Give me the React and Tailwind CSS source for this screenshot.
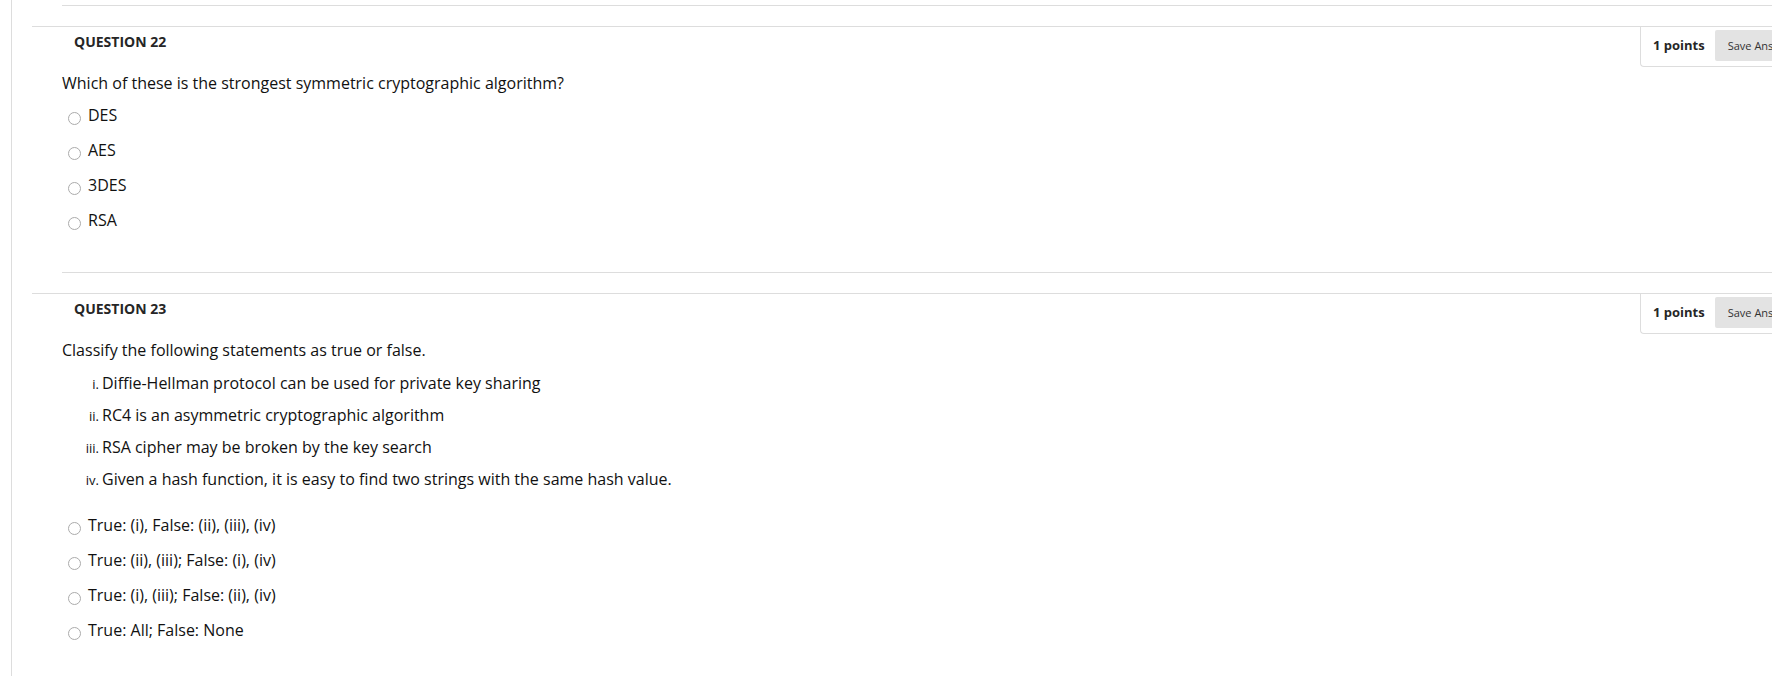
import React from 'react';

const questions = [
  {
    number: 22,
    points: 1,
    text: 'Which of these is the strongest symmetric cryptographic algorithm?',
    options: ['DES', 'AES', '3DES', 'RSA'],
  },
  {
    number: 23,
    points: 1,
    text: 'Classify the following statements as true or false.',
    statements: [
      ['i.', 'Diffie-Hellman protocol can be used for private key sharing'],
      ['ii.', 'RC4 is an asymmetric cryptographic algorithm'],
      ['iii.', 'RSA cipher may be broken by the key search'],
      ['iv.', 'Given a hash function, it is easy to find two strings with the same hash value.'],
    ],
    options: [
      'True: (i), False: (ii), (iii), (iv)',
      'True: (ii), (iii); False: (i), (iv)',
      'True: (i), (iii); False: (ii), (iv)',
      'True: All; False: None',
    ],
  },
];

// unchecked radio, the plain browser look
const Option = ({ label }) => (
  <label className="flex h-[35px] items-start">
    <span className="ml-[6px] mt-[14px] h-[13px] w-[13px] shrink-0 rounded-full border border-[#ababab] bg-white" />
    <span className="ml-[7px] text-[16px] leading-[35px]">{label}</span>
  </label>
);

const Question = ({ q }) => (
  <li className="mt-[20px] ml-[20px] border-t border-[#dddddd]">
    {/* header: title + points box */}
    <div className="flex items-start justify-between">
      <h3 className="ml-[42px] mt-[5px] text-[14px] font-bold leading-[20px] text-[#262626]">
        QUESTION {q.number}
      </h3>
      <div className="-mt-px flex w-[132px] shrink-0 items-center overflow-hidden rounded-bl-[4px] border border-r-0 border-[#dddddd] pb-[5px] pl-[12px] pt-[3px]">
        <span className="whitespace-nowrap text-[13px] font-bold text-[#262626]">{q.points} points</span>
        <span className="ml-[10px] h-[31px] shrink-0 whitespace-nowrap rounded-[2px] bg-[#e3e3e3] pl-[13px] pr-[13px] text-[11px] leading-[31px] text-[#333333]">
          Save Answer
        </span>
      </div>
    </div>

    <div className="pl-[30px]">
      <p className="mt-[4px] text-[16px] leading-[24px]">{q.text}</p>

      {q.statements && (
        <ol className="mt-[5px]">
          {q.statements.map(([num, s]) => (
            <li key={num} className="flex h-[32px] items-baseline leading-[32px]">
              <span className="w-[40px] shrink-0 pr-[3px] text-right text-[13px]">{num}</span>
              <span className="text-[16px]">{s}</span>
            </li>
          ))}
        </ol>
      )}

      <div className={q.statements ? 'mt-[13px]' : 'mt-[3px]'}>
        {q.options.map((o) => (
          <Option key={o} label={o} />
        ))}
      </div>
    </div>

    <div className="ml-[30px] mt-[34px] border-t border-[#dddddd]" />
  </li>
);

export default function App() {
  return (
    <div className="h-[676px] w-full overflow-hidden bg-white pl-[11px] font-['Open_Sans',sans-serif] text-[#111111]">
      <div className="h-full border-l border-[#dddddd]">
        <div className="h-[5px]" />
        <div className="ml-[50px] border-t border-[#dddddd]" />
        <ul>
          {questions.map((q) => (
            <Question key={q.number} q={q} />
          ))}
        </ul>
      </div>
    </div>
  );
}
